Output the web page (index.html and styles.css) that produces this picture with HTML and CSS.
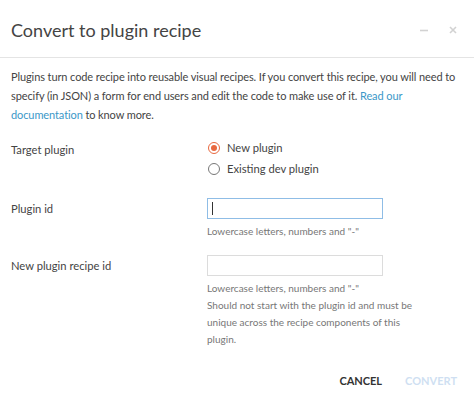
FILE: index.html
```html
<!DOCTYPE html>
<html>
<head>
<meta charset="utf-8">
<link rel="stylesheet" href="styles.css">
</head>
<body>
<div class="modal">
  <div class="header">
    <h1 class="title">Convert to plugin recipe</h1>
    <div class="header-actions">
      <svg class="hicon" width="10" height="10" viewBox="0 0 10 10"><path d="M1 5.5H9" stroke="#d2d2d2" stroke-width="1.6"/></svg>
      <svg class="hicon" width="10" height="10" viewBox="0 0 10 10"><path d="M2 2L8 8M8 2L2 8" stroke="#d2d2d2" stroke-width="1.6"/></svg>
    </div>
  </div>
  <div class="content">
    <p class="intro">Plugins turn code recipe into reusable visual recipes. If you convert this recipe, you will need to specify (in JSON) a form for end users and edit the code to make use of it. <a class="link">Read our documentation</a> to know more.</p>
    <div class="row row-radio">
      <div class="label">Target plugin</div>
      <div class="control">
        <div class="radio"><span class="dot checked"></span>New plugin</div>
        <div class="radio"><span class="dot"></span>Existing dev plugin</div>
      </div>
    </div>
    <div class="row row-id">
      <div class="label">Plugin id</div>
      <div class="control">
        <div class="input focused"><span class="caret"></span></div>
        <div class="help">Lowercase letters, numbers and "-"</div>
      </div>
    </div>
    <div class="row row-recipe">
      <div class="label">New plugin recipe id</div>
      <div class="control">
        <div class="input"></div>
        <div class="help multi">Lowercase letters, numbers and "-"<br>Should not start with the plugin id and must be unique across the recipe components of this plugin.</div>
      </div>
    </div>
  </div>
  <div class="footer">
    <span class="btn cancel">CANCEL</span>
    <span class="btn convert">CONVERT</span>
  </div>
</div>
</body>
</html>
```
FILE: styles.css
```css
* { box-sizing: border-box; }
body {
  margin: 0;
  background: #fff;
  font-family: "Lato", "Open Sans", sans-serif;
  color: #444;
}
.modal { width: 474px; height: 403px; display: flex; flex-direction: column; }
.header {
  height: 58px;
  border-bottom: 1px solid #e4e4e4;
  display: flex;
  align-items: center;
  justify-content: space-between;
  padding: 2px 16px 0 11px;
}
.title {
  margin: 0;
  font-size: 18px;
  font-weight: 400;
  color: #444;
}
.header-actions { display: flex; gap: 19px; align-items: center; }
.hicon { display: block; }
.content { padding: 9px 11px 0 11px; }
.intro {
  margin: 0;
  font-size: 11px;
  letter-spacing: -0.1px;
  line-height: 19px;
  color: #444;
}
.link { color: #3b98c8; }
.row { display: grid; grid-template-columns: 196px 176px; font-size: 11.2px; }
.row-radio { margin-top: 13px; }
.row-id { margin-top: 19px; }
.row-recipe { margin-top: 15px; }
.label { line-height: 20px; color: #444; }
.row-radio .label { padding-top: 3px; }
.row-id .label, .row-recipe .label { padding-top: 1px; }
.radio {
  display: flex;
  align-items: center;
  gap: 7px;
  height: 21px;
  padding-left: 1px;
}
.dot {
  width: 12px; height: 12px;
  border: 1.3px solid #777;
  border-radius: 50%;
  display: inline-block;
  position: relative;
}
.dot.checked { border-color: #e8683f; }
.dot.checked::after {
  content: "";
  position: absolute;
  left: 50%; top: 50%;
  width: 6px; height: 6px;
  margin: -3px 0 0 -3px;
  border-radius: 50%;
  background: #e8683f;
}
.input {
  height: 21px;
  width: 176px;
  border: 1px solid #dcdcdc;
  background: #fff;
  display: flex;
  align-items: center;
  padding-left: 4px;
}
.input.focused { border-color: #8fbde6; }
.caret { width: 1px; height: 13px; background: #333; }
.help {
  font-size: 10px;
  color: #777;
  line-height: 17px;
  margin-top: 4px;
  width: 208px;
}
.footer {
  margin-top: auto;
  display: flex;
  justify-content: flex-end;
  gap: 23px;
  padding: 0 17px 16px 0;
  font-size: 11px;
  font-weight: 700;
}
.cancel { color: #333; }
.convert { color: #cfdff2; }
```
